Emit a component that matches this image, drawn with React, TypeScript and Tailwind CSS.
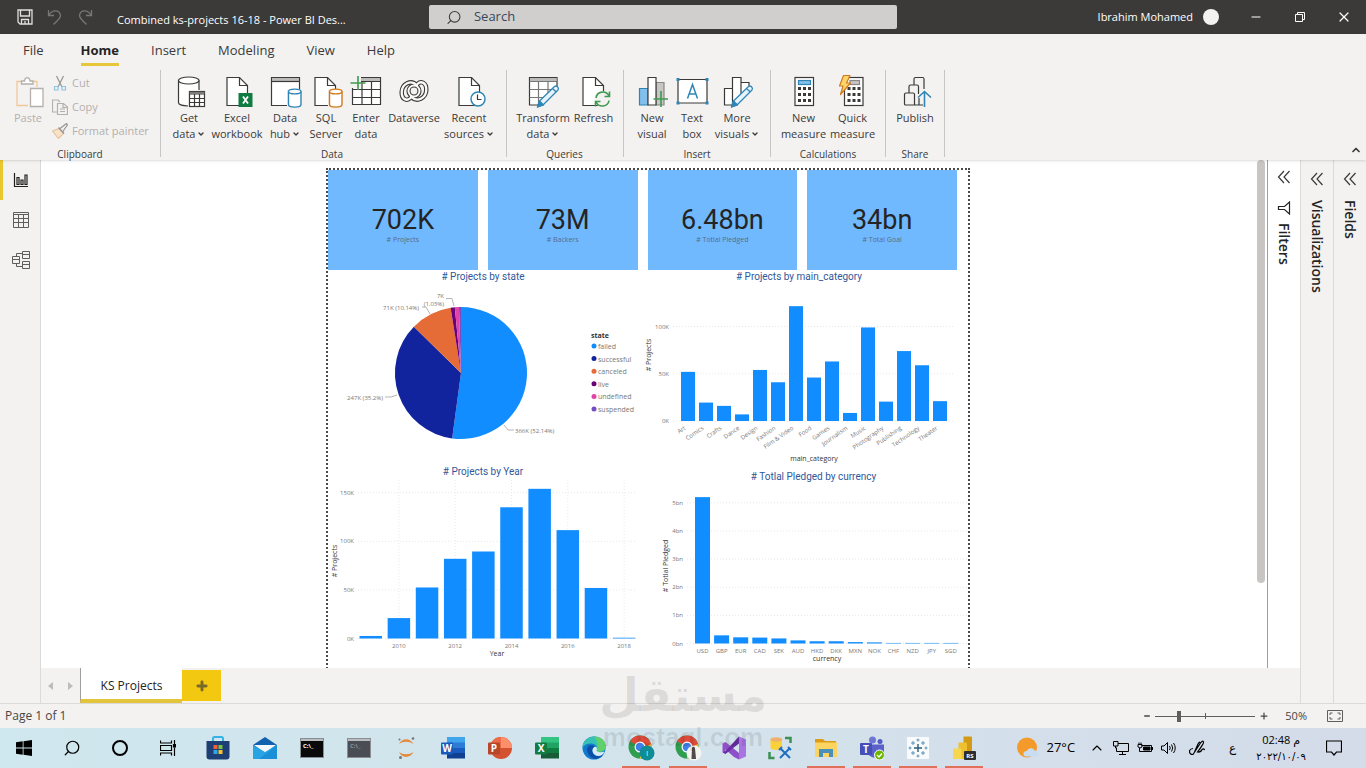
import { useState } from 'react';
import type { ReactNode } from 'react';
import { ChevronDown, ChevronUp, Minus, Plus, Search, X } from 'lucide-react';

type Point = { label: string; value: number };

type RibbonItem = {
  lines: string[];
  width: string;
  icon: ReactNode;
  menu?: boolean;
};

type RibbonGroupData = {
  name: string;
  padding: string;
  items: RibbonItem[];
};

const DARK = '#3b3a39';
const BLUE = '#2f86b5';

const Icon = ({ children }: { children: ReactNode }) => (
  <svg className="w-8 h-8 overflow-visible" viewBox="0 0 32 32" fill="none" stroke={DARK} strokeWidth="1.2">
    {children}
  </svg>
);

const Doc = ({ x = 5.5 }: { x?: number }) => (
  <g transform={`translate(${x} 0)`}>
    <path d="M0 1.5H12.5L20.5 9.5V29.5H0Z" fill="#fff" />
    <path d="M12.5 1.5V9.5H20.5" />
  </g>
);

const Cylinder = ({ color }: { color: string }) => (
  <g stroke={color} fill="#fff" strokeWidth="1.4">
    <path d="M19.5 15.5V28.5C19.5 32 32 32 32 28.5V15.5" />
    <ellipse cx="25.75" cy="15.5" rx="6.25" ry="2.4" />
  </g>
);

const Pencil = () => (
  <g stroke={BLUE} strokeWidth="1.3" strokeLinejoin="round">
    <path d="M10.5 31L12.5 25L27.5 10.5C29.5 9 32.5 11.5 31 14L16 29Z" fill="#e6f3fb" />
    <path d="M10.5 31L12.5 25L16.5 29Z" fill={BLUE} />
    <path d="M25.5 12.5L29.3 16" />
  </g>
);

const CalcKeys = ({ x }: { x: number }) => (
  <g fill={DARK} stroke="none">
    {[11, 17, 23].map((y) => [0, 5, 10].map((dx) => <rect key={`${y}-${dx}`} x={x + dx} y={y} width="3" height="3" />))}
  </g>
);

const DatabaseTableIcon = () => (
  <Icon>
    <path d="M5.5 4.5V26.5C5.5 29 11 30 15 30V15H26V4.5" fill="#fff" stroke="none" />
    <path d="M5.5 4.5V26.5C5.5 29 11 30 15 30M26 4.5V14" />
    <ellipse cx="15.75" cy="4.5" rx="10.25" ry="3.5" fill="#fff" />
    <rect x="16.5" y="15.5" width="15" height="15" fill="#fff" />
    <path d="M16.5 18H31.5M16.5 22.5H31.5M16.5 26.5H31.5M21.5 18V30.5M26.5 18V30.5" />
    <path d="M16.5 16.8H31.5" stroke="#777" strokeWidth="2" />
  </Icon>
);

const ExcelDocIcon = () => (
  <Icon>
    <Doc x={6} />
    <rect x="17.5" y="17" width="14" height="14" fill="#107c41" stroke="none" />
    <path d="M22 20.5L27 27.5M27 20.5L22 27.5" stroke="#fff" strokeWidth="1.8" />
  </Icon>
);

const DataHubIcon = () => (
  <Icon>
    <path d="M2.5 1.5H30.5V29.5H2.5Z" fill="#fff" />
    <path d="M3 2H30V5H3Z" fill="#bbb" stroke="none" />
    <path d="M2.5 5.5H30.5" />
    <path d="M18 13H34V31.5H18Z" fill="#f3f2f1" stroke="none" />
    <Cylinder color={BLUE} />
  </Icon>
);

const SqlIcon = () => (
  <Icon>
    <Doc x={5} />
    <path d="M18 13H27V31H18Z" fill="#f3f2f1" stroke="none" />
    <Cylinder color="#d07a1c" />
  </Icon>
);

const EnterDataIcon = () => (
  <Icon>
    <path d="M2.5 1.5H30.5V28.5H2.5Z" fill="#fff" />
    <path d="M3 2H30V5H3Z" fill="#bbb" stroke="none" />
    <path d="M2.5 5.5H30.5M2.5 13.5H30.5M2.5 21.5H30.5M12 5.5V28.5M21.5 5.5V28.5" />
    <path d="M0 -1H11V12H0Z" fill="#f3f2f1" stroke="none" />
    <path d="M8 0V14M0.5 7H15.5" stroke="#3f9a4f" strokeWidth="1.6" />
  </Icon>
);

const swirl = 'M19 9.5C13 3 4 8 3.700 16C3.500 23.500 9 25.500 12.500 22M13 20.500C19 27 28 22 28.300 14C28.500 6.500 23 4.500 19.500 8';

const DataverseIcon = () => (
  <Icon>
    <g strokeLinecap="round">
      <path d={swirl} strokeWidth="4.500" />
      <circle cx="16" cy="15" r="5.500" strokeWidth="4.200" />
      <path d={swirl} stroke="#fafafa" strokeWidth="2.300" />
      <circle cx="16" cy="15" r="5.500" stroke="#fafafa" strokeWidth="2" />
    </g>
  </Icon>
);

const RecentIcon = () => (
  <Icon>
    <Doc x={6} />
    <circle cx="25" cy="23" r="7" fill="#fff" stroke={BLUE} strokeWidth="1.5" />
    <path d="M24.5 18.5V23.5H28.5" />
  </Icon>
);

const TransformIcon = () => (
  <Icon>
    <path d="M2.5 1.5H30V29H2.5Z" fill="#fff" />
    <path d="M3 2H29.5V5H3Z" fill="#bbb" stroke="none" />
    <path d="M2.5 5.5H30M2.5 13.5H30M2.5 21.5H30M11.5 5.5V29M21 5.5V29" stroke="#777" />
    <path d="M11 32L31 11V32Z" fill="#f3f2f1" stroke="none" />
    <Pencil />
  </Icon>
);

const RefreshIcon = () => (
  <Icon>
    <Doc x={5} />
    <circle cx="24.5" cy="23" r="8" fill="#f3f2f1" stroke="none" />
    <g stroke="#3f9a4f" strokeWidth="1.6">
      <path d="M18 22C19 15 28 14 31 20M31.5 15.5V20.5H26.5" />
      <path d="M31 24.5C30 31 21 32 18 26M17.5 30.5V25.5H22.5" />
    </g>
  </Icon>
);

const NewVisualIcon = () => (
  <Icon>
    <path d="M3.5 12.5H12V29H3.5Z" fill="#83bfec" stroke={BLUE} />
    <path d="M20 6.5H28V29H20Z" fill="#c8c6c4" stroke="#8a8886" />
    <path d="M12 1.5H20V29H12Z" fill="#fff" />
    <path d="M25 15V31M17.5 23H32" stroke="#3f9a4f" strokeWidth="1.6" />
  </Icon>
);

const TextBoxIcon = () => (
  <Icon>
    <path d="M2 3.5H31V27H2Z" fill="#fff" />
    <path d="M11.5 22.5L16.5 8.5L21.5 22.5M13.2 18H19.8" stroke={BLUE} strokeWidth="1.5" />
    <path d="M0.5 2H3.5V5H0.5ZM29.5 2H32.5V5H29.5ZM0.5 25.5H3.5V28.5H0.5ZM29.5 25.5H32.5V28.5H29.5Z" fill={BLUE} stroke="none" />
  </Icon>
);

const MoreVisualsIcon = () => (
  <Icon>
    <path d="M3.5 12.5H11.5V29H3.5ZM20 6.5H28V29H20ZM11.5 1.5H20V29H11.5Z" fill="#fff" />
    <path d="M11 32L31 11V32Z" fill="#f3f2f1" stroke="none" />
    <Pencil />
  </Icon>
);

const MeasureIcon = () => (
  <Icon>
    <rect x="7" y="1.5" width="18.5" height="28" fill="#fff" />
    <rect x="10.5" y="4.5" width="12" height="4" fill="#83bfec" stroke={BLUE} />
    <CalcKeys x={10} />
  </Icon>
);

const QuickMeasureIcon = () => (
  <Icon>
    <rect x="7.5" y="1.5" width="18.5" height="28" fill="#fff" />
    <rect x="13" y="4.5" width="9.5" height="4" fill="#c8c6c4" stroke="#8a8886" />
    <CalcKeys x={10.5} />
    <path d="M6.5 -0.5H13L9.5 7H13.5L3.5 18.5L6 10H2.5Z" fill="#fbd56b" stroke="#d07a1c" strokeLinejoin="round" />
  </Icon>
);

const PublishIcon = () => (
  <Icon>
    <path d="M5.5 18.5Q5.5 17 7 17H14Q15.5 17 15.5 18.5V29H6.5Q5.5 29 5.5 28ZM10 17V10.5Q10 9 11.5 9H18Q19.5 9 19.5 10.5V18M15 9V3Q15 1.5 16.5 1.5H23.5Q25 1.5 25 3V13M15.5 29H24M20 22V29" />
    <path d="M25.5 31V15.5M19 21.5L25.5 15.5L32 21.5" stroke={BLUE} strokeWidth="1.6" />
  </Icon>
);

const ribbonGroups: RibbonGroupData[] = [
  {
    name: 'Data',
    padding: 'pl-[7px] pr-[10px]',
    items: [
      { lines: ['Get', 'data'], width: 'w-[42px]', icon: <DatabaseTableIcon />, menu: true },
      { lines: ['Excel', 'workbook'], width: 'w-[54px]', icon: <ExcelDocIcon /> },
      { lines: ['Data', 'hub'], width: 'w-[42px]', icon: <DataHubIcon />, menu: true },
      { lines: ['SQL', 'Server'], width: 'w-[40px]', icon: <SqlIcon /> },
      { lines: ['Enter', 'data'], width: 'w-[40px]', icon: <EnterDataIcon /> },
      { lines: ['Dataverse'], width: 'w-[56px]', icon: <DataverseIcon /> },
      { lines: ['Recent', 'sources'], width: 'w-[54px]', icon: <RecentIcon />, menu: true },
    ],
  },
  {
    name: 'Queries',
    padding: 'pl-[7px] pr-[8px]',
    items: [
      { lines: ['Transform', 'data'], width: 'w-[58px]', icon: <TransformIcon />, menu: true },
      { lines: ['Refresh'], width: 'w-[43px]', icon: <RefreshIcon /> },
    ],
  },
  {
    name: 'Insert',
    padding: 'px-[8px]',
    items: [
      { lines: ['New', 'visual'], width: 'w-[40px]', icon: <NewVisualIcon /> },
      { lines: ['Text', 'box'], width: 'w-[40px]', icon: <TextBoxIcon /> },
      { lines: ['More', 'visuals'], width: 'w-[50px]', icon: <MoreVisualsIcon />, menu: true },
    ],
  },
  {
    name: 'Calculations',
    padding: 'px-[8px]',
    items: [
      { lines: ['New', 'measure'], width: 'w-[49px]', icon: <MeasureIcon /> },
      { lines: ['Quick', 'measure'], width: 'w-[49px]', icon: <QuickMeasureIcon /> },
    ],
  },
  {
    name: 'Share',
    padding: 'px-[8px]',
    items: [{ lines: ['Publish'], width: 'w-[42px]', icon: <PublishIcon /> }],
  },
];

const TitleBar = () => (
  <header className="flex h-[34px] shrink-0 items-center bg-[#3b3a39] text-[11px] text-white">
    <div className="flex w-[429px] shrink-0 items-center pl-[17px]">
      <button aria-label="Save">
        <svg className="w-4 h-4" viewBox="0 0 16 16" fill="none" stroke="#e1dfdd" strokeWidth="1.3">
          <path d="M1 1H15V15H3L1 13ZM3.5 1V7H12.5V1M4.5 15V10.5H11.5V15M8 12V15" />
        </svg>
      </button>
      <button aria-label="Undo" className="ml-3.5">
        <svg className="w-4 h-4" viewBox="0 0 16 16" fill="none" stroke="#797775" strokeWidth="1.3">
          <path d="M1.5 1V6.5H7M1.5 6.5C5 1 11 0.5 13 4.5C14.5 8 12.5 9.5 6.5 15.5" />
        </svg>
      </button>
      <button aria-label="Redo" className="ml-3.5">
        <svg className="w-4 h-4" viewBox="0 0 16 16" fill="none" stroke="#797775" strokeWidth="1.3">
          <path d="M14.5 1V6.5H9M14.5 6.5C11 1 5 0.5 3 4.5C1.5 8 3.5 9.5 9.5 15.5" />
        </svg>
      </button>
      <span className="mt-1.5 ml-6">Combined ks-projects 16-18 - Power BI Des...</span>
    </div>
    <label className="flex h-6 flex-1 items-center rounded-xs bg-[#d0cfce] pl-[17px]">
      <Search className="w-[17px] h-[17px] -scale-x-100 text-[#3b3a39]" strokeWidth={1.6} />
      <input aria-label="Search" placeholder="Search" className="ml-3 w-full bg-transparent text-[13px] outline-none placeholder:text-[#39475a]" />
    </label>
    <div className="flex w-[469px] shrink-0 items-center justify-end">
      <span>Ibrahim Mohamed</span>
      <span className="mr-[15px] ml-2.5 h-4 w-4 rounded-full bg-[#f3f2f1]" />
      <button aria-label="Minimize" className="flex w-11 justify-center">
        <Minus className="w-3.5 h-3.5" strokeWidth={1.8} />
      </button>
      <button aria-label="Restore" className="flex w-11 justify-center">
        <svg className="w-2.5 h-2.5" viewBox="0 0 10 10" fill="none" stroke="#fff">
          <path d="M0.5 2.5H7.5V9.5H0.5ZM2.5 2.5V0.5H9.5V7.5H7.5" />
        </svg>
      </button>
      <button aria-label="Close" className="flex w-11 justify-center">
        <X className="w-4 h-4" strokeWidth={1.8} />
      </button>
    </div>
  </header>
);

const tabs = ['Home', 'Insert', 'Modeling', 'View', 'Help'];

const Ribbon = () => {
  const [activeTab, setActiveTab] = useState('Home');

  return (
    <div className="relative z-10 h-[126px] shrink-0 bg-[#f3f2f1] shadow-sm">
      <nav className="flex h-9 items-start pl-[23px] text-[13px] text-[#3b3a39]">
        <button className="mr-[37px] h-8 border-b-3 border-transparent pt-1">File</button>
        <div className="flex gap-8">
          {tabs.map((tab) => (
            <button
              key={tab}
              onClick={() => setActiveTab(tab)}
              className={`h-8 border-b-3 pt-1 ${activeTab === tab ? 'border-[#e8c63c] font-bold text-[#252423]' : 'border-transparent'}`}
            >
              {tab}
            </button>
          ))}
        </div>
      </nav>

      <div className="flex h-[90px] text-[11px] leading-4 text-[#3b3a39]">
        <div className="flex w-40 flex-col justify-between">
          <div className="flex text-[#b3b0ad]">
            <button className="mt-1.5 ml-3 flex w-8 flex-col items-center gap-0.5">
              <svg className="w-8 h-8" viewBox="0 0 32 32" fill="none" strokeWidth="1.3">
                <path d="M16 29.500H5V5.500H10M20 5.500H25V11" stroke="#f0c896" />
                <path d="M9.500 8V5H12.500C13 0.500 17.500 0.500 18 5H21V8Z" stroke="#b3b0ad" fill="#fff" />
                <path d="M18.500 12.500H31V30.500H18.500Z" stroke="#b3b0ad" fill="#fff" />
              </svg>
              Paste
            </button>
            <div className="ml-2 flex flex-col gap-2 pt-[5px]">
              <button className="flex items-center gap-1">
                <svg className="w-4 h-4" viewBox="0 0 16 16" fill="none" strokeWidth="1.2">
                  <path d="M4.500 1L10 12M11.500 1L6 12" stroke="#979593" />
                  <path d="M2.500 11.500H6V15H2.500ZM10 11.500H13.500V15H10Z" stroke="#8fc4e0" />
                </svg>
                Cut
              </button>
              <button className="flex items-center gap-1">
                <svg className="w-4 h-4" viewBox="0 0 16 16" fill="none" stroke="#b3b0ad" strokeWidth="1.2">
                  <path d="M5 13H0.500V1H6L8 3M5.500 4.500H11.500L15.500 8V15.500H5.500ZM11 4.500V8.500H15.500M8 10H13M8 12.500H13" />
                </svg>
                Copy
              </button>
              <button className="flex items-center gap-1">
                <svg className="w-4 h-4" viewBox="0 0 16 16" fill="none" strokeWidth="1.2">
                  <path d="M0.500 8L7 5.500L11.500 10.500L6.500 15.500Z" stroke="#e5c39c" fill="#f7e3ca" />
                  <path d="M6.500 4.500L12 10.500M8 5.500L10 4L14.500 0.500L15.500 2L12.500 6L11 8.500" stroke="#979593" />
                </svg>
                Format painter
              </button>
            </div>
          </div>
          <span className="text-center text-[10px] leading-3">Clipboard</span>
        </div>
        <div className="h-[87px] w-px bg-[#c8c6c4]" />

        {ribbonGroups.map((group) => (
          <div key={group.name} className="flex">
            <div className={`flex flex-col justify-between ${group.padding}`}>
              <div className="flex pt-1.5">
                {group.items.map((item) => (
                  <button key={item.lines.join(' ')} className={`flex flex-col items-center gap-0.5 ${item.width}`}>
                    {item.icon}
                    <span className="flex flex-col items-center whitespace-nowrap">
                      {item.lines.map((line, i) => (
                        <span key={line} className="flex items-center">
                          {line}
                          {item.menu && i === item.lines.length - 1 && <ChevronDown className="ml-0.5 h-2 w-2" strokeWidth={4} />}
                        </span>
                      ))}
                    </span>
                  </button>
                ))}
              </div>
              <span className="text-center text-[10px] leading-3">{group.name}</span>
            </div>
            <div className="h-[87px] w-px bg-[#c8c6c4]" />
          </div>
        ))}
        <button aria-label="Collapse ribbon" className="mr-1 ml-auto self-end pb-1">
          <ChevronUp className="h-3 w-3" strokeWidth={3.5} />
        </button>
      </div>
    </div>
  );
};

const ViewRail = () => (
  <nav className="flex w-[41px] shrink-0 flex-col border-r border-[#dcdad8] bg-[#f3f2f1]">
    <button aria-label="Report" className="flex h-10 items-center border-l-3 border-[#eac62f] pl-2.5">
      <svg className="h-4 w-4" viewBox="0 0 16 16" fill="none" stroke="#201f1e" strokeWidth="1.2">
        <path d="M1.500 1V14.500H15M4 5.500H6V12.500H4ZM8 8H10V12.500H8ZM12 3H14V12.500H12Z" />
      </svg>
    </button>
    <button aria-label="Data" className="flex h-10 items-center pl-[13px]">
      <svg className="h-4 w-4" viewBox="0 0 16 16" fill="none" stroke="#605e5c">
        <path d="M0.500 0.500H15.500V15.500H0.500ZM0.500 2.500H15.500M0.500 6.500H15.500M0.500 10.500H15.500M5.500 3V15.500M10.500 3V15.500" />
      </svg>
    </button>
    <button aria-label="Model" className="flex h-10 items-center pl-3">
      <svg className="h-[18px] w-[18px]" viewBox="0 0 18 18" fill="none" stroke="#605e5c">
        <path d="M0.500 5.500H7.500V12.500H0.500ZM0.500 8.500H7.500M10.500 0.500H17.500V7.500H10.500ZM10.500 3.500H17.500M10.500 10.500H17.500V17.500H10.500ZM10.500 13.500H17.500M4.500 5.500V2.500H10.500M4.500 12.500V15.500H10.500" />
      </svg>
    </button>
  </nav>
);

type BarChartProps = {
  data: Point[];
  width: number;
  height: number;
  plotLeft: number;
  plotRight: number;
  baseline: number;
  firstBar: number;
  step: number;
  barWidth: number;
  // pixels drawn for one unit of value
  scale: number;
  ticks: Point[];
  xTitle: string;
  yTitle: string;
  yTitleX: number;
  yTitleY: number;
  xTitleY: number;
  tilted?: boolean;
  vertical?: boolean;
};

const BarChart = (p: BarChartProps) => (
  <svg className="block max-w-none overflow-visible" width={p.width} height={p.height} viewBox={`0 0 ${p.width} ${p.height}`}>
    {p.ticks.map((t) => {
      const y = p.baseline - t.value * p.scale;
      return (
        <g key={t.label}>
          <line x1={p.plotLeft} x2={p.plotRight} y1={y} y2={y} stroke="#e8e8e8" strokeDasharray="1 2" />
          <text x={p.plotLeft - 4} y={y + 2} textAnchor="end" fontSize="6" fill="#777">{t.label}</text>
        </g>
      );
    })}
    {p.data.map((d, i) => {
      const x = p.firstBar + i * p.step;
      const center = x + p.barWidth / 2;
      const h = d.value * p.scale;
      return (
        <g key={d.label}>
          {p.vertical && i % 2 === 1 && (
            <line x1={center} x2={center} y1="2" y2={p.baseline} stroke="#e8e8e8" strokeDasharray="1 2" />
          )}
          <rect x={x} y={p.baseline - h} width={p.barWidth} height={h} fill="#118dff" />
          {p.tilted ? (
            <text transform={`translate(${center - 2} ${p.baseline + 8}) rotate(-35)`} textAnchor="end" fontSize="6" fill="#777">{d.label}</text>
          ) : (
            (!p.vertical || i % 2 === 1) && (
              <text x={center} y={p.baseline + 9} textAnchor="middle" fontSize="6" fill="#777">{d.label}</text>
            )
          )}
        </g>
      );
    })}
    <text transform={`translate(${p.yTitleX} ${p.yTitleY}) rotate(-90)`} textAnchor="middle" fontSize="7" fill="#333">{p.yTitle}</text>
    <text x={(p.plotLeft + p.plotRight) / 2} y={p.xTitleY} textAnchor="middle" fontSize="7" fill="#333">{p.xTitle}</text>
  </svg>
);

const states = [
  { label: 'failed', value: 52.14, color: '#118dff' },
  { label: 'successful', value: 35.2, color: '#12239e' },
  { label: 'canceled', value: 10.14, color: '#e66c37' },
  { label: 'live', value: 1.03, color: '#6b007b' },
  { label: 'undefined', value: 1, color: '#e044a7' },
  { label: 'suspended', value: 0.49, color: '#744ec2' },
];

const slicePath = (start: number, end: number) => {
  const at = (f: number) => {
    const a = f * Math.PI * 2;
    return `${133 + 66 * Math.sin(a)} ${87 - 66 * Math.cos(a)}`;
  };
  return `M133 87L${at(start)}A66 66 0 ${end - start > 0.5 ? 1 : 0} 1 ${at(end)}Z`;
};

const StatePie = () => {
  let total = 0;
  const slices = states.map((s) => {
    const start = total;
    total += s.value / 100;
    return { ...s, d: slicePath(start, total) };
  });

  return (
    <svg className="block max-w-none" width="310" height="179" viewBox="0 0 310 179" fontSize="6" fill="#777">
      {slices.map((s) => (
        <path key={s.label} d={s.d} fill={s.color} />
      ))}
      <g fill="none" stroke="#b5b5b5">
        <path d="M126 20L124 12.500H118M102 28L98 21H94M69 109L63 111H57M176 139L180 144H186" />
      </g>
      <text x="116" y="12" textAnchor="end">7K</text>
      <text x="116" y="20" textAnchor="end">(1.03%)</text>
      <text x="91" y="24" textAnchor="end">71K (10.14%)</text>
      <text x="55" y="114" textAnchor="end">247K (35.2%)</text>
      <text x="187" y="147">366K (52.14%)</text>
      <text x="263" y="52" fontSize="7" fontWeight="bold" fill="#333">state</text>
      {states.map((s, i) => (
        <g key={s.label}>
          <circle cx="266" cy={60 + i * 12.6} r="2.5" fill={s.color} />
          <text x="270" y={63 + i * 12.6} fontSize="7">{s.label}</text>
        </g>
      ))}
    </svg>
  );
};

const categories: Point[] = [
  { label: 'Art', value: 52 },
  { label: 'Comics', value: 19.5 },
  { label: 'Crafts', value: 16 },
  { label: 'Dance', value: 7 },
  { label: 'Design', value: 54 },
  { label: 'Fashion', value: 41 },
  { label: 'Film & Video', value: 121.5 },
  { label: 'Food', value: 46 },
  { label: 'Games', value: 63 },
  { label: 'Journalism', value: 8.5 },
  { label: 'Music', value: 99 },
  { label: 'Photography', value: 20.5 },
  { label: 'Publishing', value: 74 },
  { label: 'Technology', value: 59 },
  { label: 'Theater', value: 21 },
];

const years: Point[] = [
  { label: '2009', value: 2.6 },
  { label: '2010', value: 21 },
  { label: '2011', value: 52.5 },
  { label: '2012', value: 82 },
  { label: '2013', value: 89.5 },
  { label: '2014', value: 135 },
  { label: '2015', value: 154 },
  { label: '2016', value: 111.5 },
  { label: '2017', value: 52 },
  { label: '2018', value: 0.8 },
];

const currencies: Point[] = [
  { label: 'USD', value: 5.2 },
  { label: 'GBP', value: 0.29 },
  { label: 'EUR', value: 0.22 },
  { label: 'CAD', value: 0.21 },
  { label: 'SEK', value: 0.18 },
  { label: 'AUD', value: 0.11 },
  { label: 'HKD', value: 0.08 },
  { label: 'DKK', value: 0.08 },
  { label: 'MXN', value: 0.05 },
  { label: 'NOK', value: 0.04 },
  { label: 'CHF', value: 0.02 },
  { label: 'NZD', value: 0.02 },
  { label: 'JPY', value: 0.02 },
  { label: 'SGD', value: 0.02 },
];

const cards = [
  { value: '702K', label: '# Projects' },
  { value: '73M', label: '# Backers' },
  { value: '6.48bn', label: '# Totlal Pledged' },
  { value: '34bn', label: '# Total Goal' },
];

const ChartTitle = ({ children }: { children: ReactNode }) => (
  <h2 className="text-center font-['Roboto',sans-serif] text-[10px] leading-3 text-[#31589a]">{children}</h2>
);

const Report = () => (
  <div className="mx-auto mt-2 h-[540px] w-[644px] border-2 border-dotted border-[#4a4a4a]">
    <div className="grid grid-cols-4 gap-2.5 pr-[11px]">
      {cards.map((card) => (
        <div key={card.label} className="flex h-[100px] flex-col items-center bg-[#70b9ff] pt-[34px]">
          <span className="font-['Roboto',sans-serif] text-[27px] leading-8 text-[#252423]">{card.value}</span>
          <span className="text-[7px] leading-2 text-[#5a6d80]">{card.label}</span>
        </div>
      ))}
    </div>
    <div className="flex">
      <div className="w-[310px]">
        <div className="h-[196px] pt-px">
          <ChartTitle># Projects by state</ChartTitle>
          <div className="pt-[3px]">
            <StatePie />
          </div>
        </div>
        <ChartTitle># Projects by Year</ChartTitle>
        <BarChart
          data={years} width={310} height={182} plotLeft={30} plotRight={308} baseline={160.5} firstBar={31.5}
          step={28.15} barWidth={22.5} scale={0.972} xTitle="Year" yTitle="# Projects" yTitleX={9} yTitleY={83} xTitleY={178} vertical
          ticks={[{ label: '0K', value: 0 }, { label: '50K', value: 50 }, { label: '100K', value: 100 }, { label: '150K', value: 150 }]}
        />
      </div>
      <div className="ml-[9px] flex-1">
        <div className="h-[201px] w-[310px] pt-px">
          <div className="pr-1.5">
            <ChartTitle># Projects by main_category</ChartTitle>
          </div>
          <div className="pt-[3px]">
            <BarChart
              data={categories} width={310} height={180} plotLeft={26} plotRight={308} baseline={135} firstBar={34}
              step={18} barWidth={14} scale={0.945} xTitle="main_category" yTitle="# Projects" yTitleX={4} yTitleY={69} xTitleY={175} tilted
              ticks={[{ label: '0K', value: 0 }, { label: '50K', value: 50 }, { label: '100K', value: 100 }]}
            />
          </div>
        </div>
        <div className="pl-3">
          <ChartTitle># Totlal Pledged by currency</ChartTitle>
          <BarChart
            data={currencies} width={309} height={182} plotLeft={28} plotRight={308} baseline={160.5} firstBar={36}
            step={19.1} barWidth={15} scale={28.15} xTitle="currency" yTitle="# Totlal Pledged" yTitleX={9} yTitleY={83} xTitleY={178}
            ticks={['0bn', '1bn', '2bn', '3bn', '4bn', '5bn'].map((label, value) => ({ label, value }))}
          />
        </div>
      </div>
    </div>
  </div>
);

const CollapseIcon = () => (
  <svg className="h-3.5 w-3.5" viewBox="0 0 14 14" fill="none" stroke="#3b3a39" strokeWidth="1.2">
    <path d="M7 1L1.500 7L7 13M12.500 1L7 7L12.500 13" />
  </svg>
);

const SidePane = ({ name }: { name: string }) => (
  <aside className="flex w-[33px] shrink-0 flex-col items-center border-l border-[#dcdad8] bg-[#f3f2f1] pt-3">
    <button aria-label={`Expand ${name}`}>
      <CollapseIcon />
    </button>
    <h2 className="mt-3.5 text-sm leading-4 font-semibold text-[#252423] [writing-mode:vertical-rl]">{name}</h2>
  </aside>
);

const FiltersPane = () => (
  <aside className="flex w-[33px] shrink-0 flex-col items-center border-l border-[#a19f9d] bg-white pt-2.5">
    <button aria-label="Expand Filters">
      <CollapseIcon />
    </button>
    <svg className="mt-[17px] h-3.5 w-3.5" viewBox="0 0 14 14" fill="none" stroke="#252423" strokeWidth="1.2">
      <path d="M12.500 1V13L7.500 8.500H1.500V5.500H7.500Z" />
    </svg>
    <h2 className="mt-2 text-sm leading-4 font-semibold text-[#252423] [writing-mode:vertical-rl]">Filters</h2>
  </aside>
);

const PageTabs = () => (
  <div className="flex h-[35px] shrink-0 bg-[#f3f2f1] text-xs">
    <div className="flex w-[39px] items-center justify-around text-[#bebbb8]">
      <button aria-label="Previous page">
        <svg className="h-2 w-1.5" viewBox="0 0 6 8" fill="currentColor">
          <path d="M5 0V8L0 4Z" />
        </svg>
      </button>
      <button aria-label="Next page">
        <svg className="h-2 w-1.5" viewBox="0 0 6 8" fill="currentColor">
          <path d="M1 0V8L6 4Z" />
        </svg>
      </button>
    </div>
    <button className="w-[102px] border-b-4 border-l border-b-[#e3c53c] border-l-[#a19f9d] bg-white pt-1 text-[#252423]">KS Projects</button>
    <button aria-label="New page" className="my-0.5 flex w-[39px] items-center justify-center bg-[#f2c811]">
      <Plus className="h-3.5 w-3.5 text-[#7a6a2a]" strokeWidth={5} />
    </button>
  </div>
);

const StatusBar = () => {
  const [zoom, setZoom] = useState(23);

  return (
    <footer className="flex h-[25px] shrink-0 items-center border-t border-[#dcdad8] bg-[#f3f2f1] text-xs text-[#484644]">
      <span className="pl-[5px]">Page 1 of 1</span>
      <div className="ml-auto flex items-center">
        <button aria-label="Zoom out">
          <Minus className="h-2 w-2" strokeWidth={4} />
        </button>
        <div className="relative mx-1 flex items-center">
          <span className="absolute left-1/2 h-1.5 w-px bg-[#605e5c]" />
          <input
            type="range"
            aria-label="Zoom"
            value={zoom}
            onChange={(e) => setZoom(Number(e.target.value))}
            className="h-3 w-[100px] appearance-none bg-[linear-gradient(#605e5c,#605e5c)] bg-[length:100%_1px] bg-center bg-no-repeat [&::-webkit-slider-thumb]:h-[11px] [&::-webkit-slider-thumb]:w-1 [&::-webkit-slider-thumb]:appearance-none [&::-webkit-slider-thumb]:bg-[#605e5c]"
          />
        </div>
        <button aria-label="Zoom in">
          <Plus className="h-2.5 w-2.5" strokeWidth={3} />
        </button>
        <span className="ml-4 text-[11px]">50%</span>
        <button aria-label="Fit to page" className="mr-[23px] ml-5">
          <svg className="h-3 w-4" viewBox="0 0 16 12" fill="none" stroke="#605e5c">
            <path d="M0.500 0.500H15.500V11.500H0.500ZM3 5V3H5.500M10.500 3H13V5M13 7V9H10.500M5.500 9H3V7" />
          </svg>
        </button>
      </div>
    </footer>
  );
};

const OfficeIcon = ({ letter, colors }: { letter: string; colors: string[] }) => (
  <svg className="h-6 w-6" viewBox="0 0 24 24">
    <rect x="6" y="1" width="18" height="6" fill={colors[0]} />
    <rect x="6" y="6.5" width="18" height="6" fill={colors[1]} />
    <rect x="6" y="12" width="18" height="5.5" fill={colors[2]} />
    <rect x="6" y="17" width="18" height="5.5" fill={colors[3]} />
    <rect x="0" y="6.5" width="12" height="12" rx="1" fill={colors[2]} />
    <text x="6" y="16" fontSize="10" fontWeight="bold" fill="#fff" textAnchor="middle">{letter}</text>
  </svg>
);

const ConsoleIcon = ({ dim }: { dim?: boolean }) => (
  <svg className="h-5 w-6" viewBox="0 0 24 20">
    <rect x="0.5" y="0.5" width="23" height="19" fill={dim ? '#4a4e54' : '#0a0a0a'} stroke="#8a8d91" />
    <rect x="1" y="1" width="22" height="2" fill="#b9bcc0" />
    <text x="3" y="10" fontSize="6" fontWeight="bold" fill={dim ? '#8d9299' : '#fff'}>C:\_</text>
  </svg>
);

const ChromeIcon = ({ badge }: { badge: ReactNode }) => (
  <svg className="h-7 w-7" viewBox="0 0 28 28">
    <circle cx="13" cy="13" r="11.5" fill="#2f9e4f" />
    <path d="M13 13L3 7.300A11.500 11.500 0 0 1 23 7.300Z" fill="#df4a3a" />
    <path d="M13 13L23 7.300A11.500 11.500 0 0 1 13 24.500Z" fill="#f7c52e" />
    <path d="M13 7.500H23L24 10L18 13Z" fill="#df4a3a" />
    <circle cx="13" cy="13" r="5.5" fill="#fff" />
    <circle cx="13" cy="13" r="4.3" fill="#3f7fe8" />
    {badge}
  </svg>
);

type App = { name: string; icon: ReactNode; cell: string; open?: boolean };

const apps: App[] = [
  {
    name: 'Start',
    cell: 'w-12',
    icon: (
      <svg className="h-4 w-4" viewBox="0 0 16 16">
        <path d="M0 2.300L6.700 1.300V7.600H0ZM7.500 1.200L16 0V7.600H7.500ZM0 8.400H6.700V14.700L0 13.700ZM7.500 8.400H16V16L7.500 14.800Z" />
      </svg>
    ),
  },
  { name: 'Search Windows', cell: 'w-12', icon: <Search className="h-[18px] w-[18px] -scale-x-100" strokeWidth={1.6} /> },
  { name: 'Cortana', cell: 'w-12', icon: <span className="h-4 w-4 rounded-full border-2 border-black" /> },
  {
    name: 'Task view',
    cell: 'w-12',
    icon: (
      <svg className="h-4 w-4" viewBox="0 0 16 16" fill="none" stroke="#000" strokeWidth="1.2">
        <path d="M0.500 0.500V3H11.500V0.500M0.500 5.500H11.500V10.500H0.500ZM0.500 15.500V13H11.500V15.500M14.500 0V4M14.500 7.500V16" />
        <path d="M13.500 4.500H15.500V7H13.500Z" fill="#000" />
      </svg>
    ),
  },
  {
    name: 'Store',
    cell: 'ml-0.5 w-[47px]',
    icon: (
      <svg className="h-6 w-6" viewBox="0 0 24 24">
        <path d="M7 6V2.500Q7 1 8.500 1H15.500Q17 1 17 2.500V6" fill="none" stroke="#35b3e6" strokeWidth="2" />
        <path d="M0.500 5H23.500V20.500Q23.500 23.500 20.500 23.500H3.500Q0.500 23.500 0.500 20.500Z" fill="#1d3f73" />
        <path d="M7.500 9H11.500V13H7.500Z" fill="#f0603a" />
        <path d="M12.500 9H16.500V13H12.500Z" fill="#7fc241" />
        <path d="M7.500 14H11.500V18H7.500Z" fill="#2ea6ea" />
        <path d="M12.500 14H16.500V18H12.500Z" fill="#fbc02d" />
      </svg>
    ),
  },
  {
    name: 'Mail',
    cell: 'w-[47px]',
    icon: (
      <svg className="h-6 w-6" viewBox="0 0 24 24">
        <path d="M0 9L12 1L24 9V14H0Z" fill="#1360ae" />
        <path d="M1 9H23L12 17Z" fill="#f4f8fb" />
        <path d="M0 9L12 16L24 9V23H0Z" fill="#28a3e4" />
        <path d="M3 9H21L12 15.500Z" fill="#f4f8fb" />
        <path d="M24 9L6 23H24Z" fill="#1b8fd8" />
      </svg>
    ),
  },
  { name: 'Command Prompt', cell: 'w-[47px]', icon: <ConsoleIcon /> },
  { name: 'Terminal', cell: 'w-[47px]', icon: <ConsoleIcon dim /> },
  {
    name: 'Jupyter',
    cell: 'w-[47px]',
    icon: (
      <svg className="h-6 w-6" viewBox="0 0 24 24">
        <path d="M5 8C8 1.500 16 1.500 19.500 8C15 5 9 5 5 8ZM5 16C8 22.500 16 22.500 19.500 16C15 19 9 19 5 16Z" fill="#e58a3c" />
        <circle cx="5.5" cy="3.5" r="1" fill="#777" />
        <circle cx="19" cy="2.5" r="1.3" fill="#777" />
        <circle cx="6.5" cy="21.5" r="1.5" fill="#777" />
      </svg>
    ),
  },
  { name: 'Word', cell: 'w-[47px]', icon: <OfficeIcon letter="W" colors={['#41a5ee', '#2b7cd3', '#185abd', '#103f91']} /> },
  {
    name: 'PowerPoint',
    cell: 'w-[47px]',
    icon: (
      <svg className="h-6 w-6" viewBox="0 0 24 24">
        <circle cx="13" cy="12" r="11" fill="#d35230" />
        <path d="M13 1A11 11 0 0 1 24 12H13Z" fill="#ff8f6b" />
        <path d="M13 1A11 11 0 0 0 2 12H13Z" fill="#ed6c47" />
        <rect x="0" y="6.5" width="12" height="12" rx="1" fill="#b7472a" />
        <text x="6" y="16" fontSize="10" fontWeight="bold" fill="#fff" textAnchor="middle">P</text>
      </svg>
    ),
  },
  { name: 'Excel', cell: 'w-[47px]', icon: <OfficeIcon letter="X" colors={['#33c481', '#21a366', '#107c41', '#185c37']} /> },
  {
    name: 'Edge',
    cell: 'w-[47px]',
    icon: (
      <svg className="h-6 w-6" viewBox="0 0 24 24">
        <circle cx="12" cy="12" r="11.5" fill="#1279cf" />
        <path d="M0.500 12C0.500 -3 24 -3 23.500 11C23.500 16 16 17 14.500 14.500C17 9 10 6 5 8C2 9 1 11 0.500 12Z" fill="#35c1b5" />
        <path d="M12 0.500C20 0.500 24 6 23.500 11C23.500 16 16 17 14.500 14.500C17 9 15 4 12 0.500Z" fill="#5fd06a" />
        <path d="M14.500 14.500C16 17 20 16 22.500 15.500C21 20 16 21 13 19C10 17 9 12 13 10.500C15 11 15.500 12.500 14.500 14.500Z" fill="#d8ecf5" />
        <path d="M5 13C5 9 10 8 13 10.500C9 12 9 18 14 20C17 21 20 20 21.500 18.500C14 27 5 21 5 13Z" fill="#0c4fa8" />
      </svg>
    ),
  },
  {
    name: 'Chrome',
    cell: 'w-[47px]',
    open: true,
    icon: (
      <ChromeIcon
        badge={
          <>
            <circle cx="20" cy="19" r="7.5" fill="#0e8d97" />
            <text x="20" y="22" fontSize="8" fill="#d8f0f2" textAnchor="middle">I</text>
          </>
        }
      />
    ),
  },
  {
    name: 'Chrome profile',
    cell: 'w-[47px]',
    open: true,
    icon: (
      <ChromeIcon
        badge={
          <>
            <circle cx="20" cy="19" r="7.5" fill="#f4f4f2" />
            <path d="M18 14Q19.500 11.500 21 14L22 25H17.500Z" fill="#4f4b46" />
          </>
        }
      />
    ),
  },
  {
    name: 'Visual Studio',
    cell: 'w-[46px]',
    icon: (
      <svg className="h-6 w-6" viewBox="0 0 24 24">
        <path d="M0.500 7.500L3.500 6L17 17V23.500L12 21L3.500 13.500V17.500L0.500 16Z" fill="#8e4fc9" fillRule="evenodd" />
        <path d="M17 0.500V7.500L3.500 18L0.500 16.500L3.500 15Z" fill="#6a2fa5" />
        <path d="M17 0.500L24 3.500V20.500L17 23.500Z" fill="#a875e0" />
      </svg>
    ),
  },
  {
    name: 'SQL tools',
    cell: 'w-[46px]',
    icon: (
      <svg className="h-6 w-6" viewBox="0 0 24 24">
        <path d="M2.500 3.500V12C4 14.500 12 14.500 14 12V3.500Z" fill="#fbd13a" />
        <ellipse cx="8.3" cy="3.5" rx="5.8" ry="2.3" fill="#eeb06a" />
        <path d="M17 2H22.500V7M1.500 16V22H6.500" fill="none" stroke="#3c9053" strokeWidth="2.5" />
        <path d="M12 12L22 22M22 12L12 22M11 14L14 11M20 11L23 14" fill="none" stroke="#1f6fc0" strokeWidth="2" />
      </svg>
    ),
  },
  {
    name: 'File Explorer',
    cell: 'w-[46px]',
    open: true,
    icon: (
      <svg className="h-6 w-6" viewBox="0 0 24 24">
        <path d="M1 3H9L11 5H22V10H1Z" fill="#dc9c1a" />
        <path d="M1 6.500H23V21H1Z" fill="#fcd462" />
        <path d="M5 13H19V21H15V17H9V21H5Z" fill="#4a90b8" />
      </svg>
    ),
  },
  {
    name: 'Teams',
    cell: 'w-[46px]',
    open: true,
    icon: (
      <svg className="h-6 w-6" viewBox="0 0 24 24">
        <circle cx="12.5" cy="4" r="3.5" fill="#7076d6" />
        <circle cx="20" cy="5.5" r="2.5" fill="#5059c9" />
        <path d="M8 8.500H24V17Q20 22 13 21.500Q8 20 8 16Z" fill="#5a62c9" />
        <rect x="0" y="7" width="12" height="12" rx="1" fill="#464eb8" />
        <text x="6" y="16.5" fontSize="10" fontWeight="bold" fill="#fff" textAnchor="middle">T</text>
        <circle cx="19.5" cy="19" r="5" fill="#6bb700" stroke="#fff" />
        <path d="M17 19L19 21L22 17.500" fill="none" stroke="#fff" strokeWidth="1.3" />
      </svg>
    ),
  },
  {
    name: 'Tableau',
    cell: 'w-[46px]',
    open: true,
    icon: (
      <svg className="h-6 w-6" viewBox="0 0 24 24">
        <path d="M1 1H23V23H1Z" fill="#f9fafb" />
        <path d="M12 8V16M8 12H16" stroke="#2d5f7d" strokeWidth="1.4" />
        <path d="M7 5V9M5 7H9M17 5V9M15 7H19M7 15V19M5 17H9M17 15V19M15 17H19M12 2.500V5.500M10.500 4H13.500M12 18.500V21.500M10.500 20H13.500M4 10.500V13.500M2.500 12H5.500M20 10.500V13.500M18.500 12H21.500" stroke="#5d93b5" />
      </svg>
    ),
  },
  {
    name: 'Power BI',
    cell: 'w-[46px]',
    open: true,
    icon: (
      <svg className="h-6 w-6" viewBox="0 0 24 24">
        <path d="M11.500 0.500H19Q20 0.500 20 1.500V23H11.500Z" fill="#d39a14" />
        <path d="M6.500 6.500H14Q15 6.500 15 7.500V23H6.500Z" fill="#eebf2e" />
        <path d="M1 12.500H8.500Q9.500 12.500 9.500 13.500V23H2Q1 23 1 22Z" fill="#f8d64e" />
        <rect x="12" y="15" width="12" height="9" rx="1" fill="#2e2e2e" />
        <text x="18" y="22" fontSize="6" fontWeight="bold" fill="#fff" textAnchor="middle">RS</text>
      </svg>
    ),
  },
];

const Taskbar = () => (
  <div className="flex h-10 shrink-0 items-center bg-linear-to-r from-[#cfe7ee] via-[#d3e3ec] to-[#d4dbe9] text-black">
    {apps.map((app) => (
      <button
        key={app.name}
        aria-label={app.name}
        className={`flex h-10 shrink-0 items-center justify-center bg-no-repeat ${app.cell} ${
          app.open ? 'bg-[linear-gradient(#e0705a,#e0705a)] bg-[length:38px_2px] bg-bottom' : ''
        }`}
      >
        {app.icon}
      </button>
    ))}
    <div className="ml-auto flex items-center pr-6">
      <svg className="h-6 w-6" viewBox="0 0 24 24">
        <circle cx="11" cy="11.5" r="10" fill="#f39a2a" />
        <path d="M10 20.500C6 20 7 14.500 11 15C12 11.500 17.500 11.500 18.500 14.500C22.500 14 23.500 19.500 20 20.500Z" fill="#c8dcf2" />
      </svg>
      <span className="ml-1.5 text-[13px]">27°C</span>
      <ChevronUp className="ml-3.5 h-4 w-4" strokeWidth={1.6} />
      <svg className="ml-2 h-4 w-4" viewBox="0 0 16 16" fill="none" stroke="#000">
        <path d="M5 3.500H15.500V11.500H3.500V8M9.500 11.500V14.500M6 14.500H13M0.500 1.500H5V6H0.500ZM2.500 6V8H4" />
      </svg>
      <svg className="ml-2 h-4 w-4" viewBox="0 0 16 16" fill="none" stroke="#000">
        <path d="M4.500 5.500H14.500V11.500H5M2.500 8V11.500H5M1 4.500H5V7L3 8L1 7ZM2 2.500V4.500M4 2.500V4.500" />
        <path d="M6.500 7H13V10H6.500ZM15 7.500H16V9.500H15Z" fill="#000" />
      </svg>
      <svg className="ml-2 h-4 w-4" viewBox="0 0 16 16" fill="none" stroke="#000">
        <path d="M0.500 6H3L6.500 2.500V13.500L3 10H0.500ZM8.500 6Q10 8 8.500 10M10.500 4.500Q13 8 10.500 11.500M12.500 3Q16 8 12.500 13" />
      </svg>
      <svg className="ml-3 h-4 w-4" viewBox="0 0 16 16" fill="none" stroke="#000" strokeWidth="1.2">
        <path d="M4 8.500Q0.500 9 0.500 11.500Q0.500 14.500 4 14.500L11.500 3Q13.500 0 14.500 2Q15 3.500 8.500 12Q12 12.500 13 9.500Q15 8 15.500 10M5.500 12L9 4Q10.500 1 11 3" />
      </svg>
      <span className="ml-6 font-['DejaVu_Sans',sans-serif] text-xs">ع</span>
      <div className="ml-5 flex flex-col items-center font-['Open_Sans','DejaVu_Sans',sans-serif] text-[11px] leading-[17px]">
        <span>02:48 م</span>
        <span className="font-['DejaVu_Sans',sans-serif] text-[10px]">٢٠٢٢/١٠/٠٩</span>
      </div>
      <svg className="ml-5 h-4 w-4" viewBox="0 0 16 16" fill="none" stroke="#000" strokeWidth="1.2">
        <path d="M0.500 1H15.500V12H10.500L8 15L5.500 12H0.500Z" />
      </svg>
    </div>
  </div>
);

const Watermark = () => (
  <div className="pointer-events-none absolute bottom-4 left-1/2 z-20 flex w-[166px] -translate-x-1/2 flex-col items-center font-bold text-black/9">
    <span className="font-['DejaVu_Sans',sans-serif] text-[46px] leading-[54px]">مستقل</span>
    <span className="font-['Liberation_Sans',sans-serif] text-[26px] leading-[30px]">mostaql.com</span>
  </div>
);

export default function App() {
  return (
    <div className="relative flex h-screen flex-col overflow-hidden bg-white font-['Open_Sans',sans-serif]">
      <TitleBar />
      <Ribbon />
      <div className="flex min-h-0 flex-1">
        <ViewRail />
        <div className="flex min-w-0 flex-1 flex-col">
          <div className="flex min-h-0 flex-1">
            <main className="flex min-w-0 flex-1 overflow-hidden">
              <div className="min-w-0 flex-1">
                <Report />
              </div>
              <div className="mr-0.5 ml-0.5 h-5/6 w-2 rounded-full bg-[#c8c6c4]" />
            </main>
            <FiltersPane />
          </div>
          <PageTabs />
        </div>
        <SidePane name="Visualizations" />
        <SidePane name="Fields" />
      </div>
      <StatusBar />
      <Taskbar />
      <Watermark />
    </div>
  );
}
